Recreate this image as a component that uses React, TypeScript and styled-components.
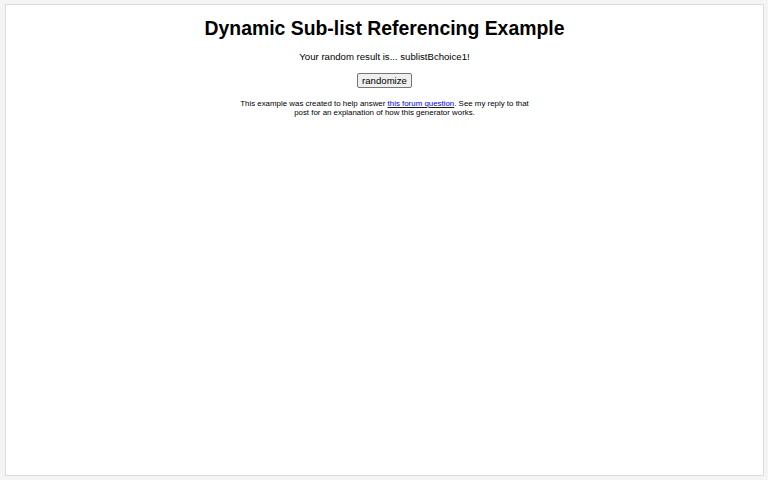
import styled, { createGlobalStyle } from 'styled-components';

const GlobalStyle = createGlobalStyle`
  html, body {
    margin: 0;
    padding: 0;
    height: 100%;
    background: #f4f4f4;
  }
  #root {
    height: 100%;
  }
`;

const Page = styled.div`
  box-sizing: border-box;
  height: 480px;
  padding: 4px 4px 4px 5px;
  font-family: 'Liberation Sans', Arial, sans-serif;
`;

const Panel = styled.main`
  box-sizing: border-box;
  height: 100%;
  background: #ffffff;
  border: 1px solid #dcdcdc;
  display: flex;
  flex-direction: column;
  align-items: center;
  padding-top: 11px;
  color: #000;
`;

const Title = styled.h1`
  margin: 0;
  font-size: 19.4px;
  font-weight: bold;
  line-height: 24px;
`;

const Result = styled.p`
  margin: 11px 0 0;
  font-size: 9.6px;
  line-height: 12px;
`;

const RandomizeButton = styled.button`
  margin-top: 10px;
  font-family: inherit;
  font-size: 9.6px;
  line-height: 11px;
  padding: 1px 4px;
  background: #efefef;
  border: 1px solid #767676;
  border-radius: 2px;
  color: #000;
`;

const Note = styled.p`
  margin: 11px 0 0;
  width: 300px;
  font-size: 7.9px;
  line-height: 9px;
  text-align: center;
`;

const ForumLink = styled.a`
  color: #0000ee;
  text-decoration: underline;
`;

export default function App() {
  return (
    <>
      <GlobalStyle />
      <Page>
        <Panel>
          <Title>Dynamic Sub-list Referencing Example</Title>
          <Result>Your random result is... sublistBchoice1!</Result>
          <RandomizeButton type="button">randomize</RandomizeButton>
          <Note>
            This example was created to help answer{' '}
            <ForumLink href="#">this forum question</ForumLink>. See my reply to that post for an
            explanation of how this generator works.
          </Note>
        </Panel>
      </Page>
    </>
  );
}
